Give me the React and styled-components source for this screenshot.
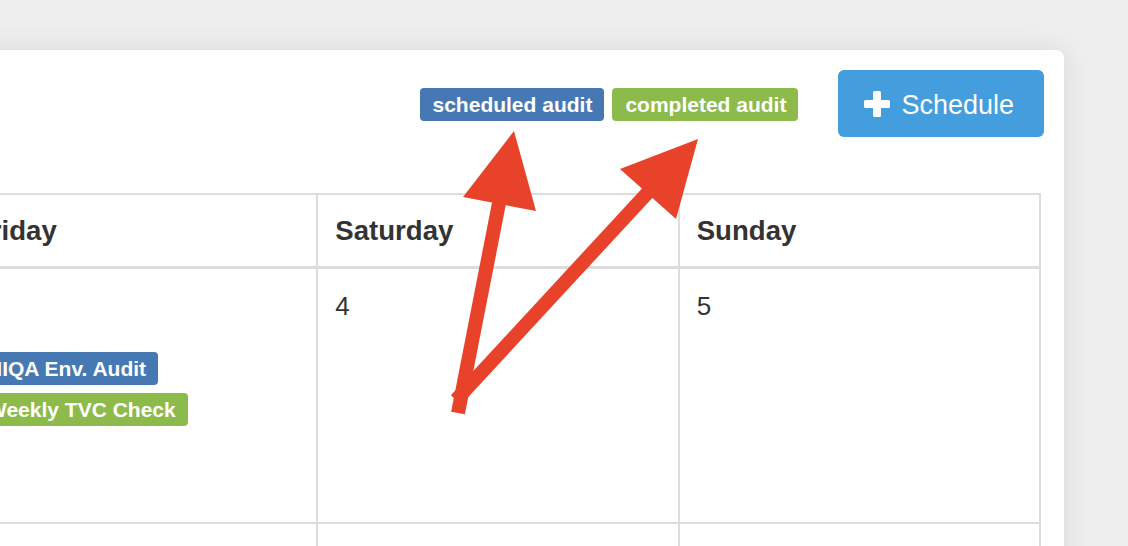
import React from 'react';
import styled, { createGlobalStyle } from 'styled-components';

const GlobalStyle = createGlobalStyle`
  html, body {
    margin: 0;
    padding: 0;
    background: #eeeeee;
    font-family: "Liberation Sans", Arial, Helvetica, sans-serif;
    color: #333333;
    overflow: hidden;
  }
`;

const colors = {
  scheduled: '#4679b4',
  completed: '#8dbb4b',
};

const days = [
  {
    name: 'Friday',
    date: 3,
    events: [
      { title: 'HIQA Env. Audit', kind: 'scheduled' },
      { title: 'Weekly TVC Check', kind: 'completed' },
    ],
  },
  { name: 'Saturday', date: 4, events: [] },
  { name: 'Sunday', date: 5, events: [] },
];

const PlusIcon = () => (
  <svg width="26" height="26" viewBox="0 0 26 26">
    <path
      d="M9 1.5 Q9 0 10.5 0 H15.5 Q17 0 17 1.5 V9 H24.5 Q26 9 26 10.5 V15.5 Q26 17 24.5 17 H17 V24.5 Q17 26 15.5 26 H10.5 Q9 26 9 24.5 V17 H1.5 Q0 17 0 15.5 V10.5 Q0 9 1.5 9 H9 Z"
      fill="#ffffff"
    />
  </svg>
);

const App = () => {
  return (
    <Page>
      <GlobalStyle />
      <Card>
        <Toolbar>
          <Legend>
            <Badge kind="scheduled">scheduled audit</Badge>
            <Badge kind="completed">completed audit</Badge>
          </Legend>
          <ScheduleButton>
            <PlusIcon />
            <span>Schedule</span>
          </ScheduleButton>
        </Toolbar>

        <Calendar>
          <thead>
            <tr>
              {days.map(d => (
                <HeadCell key={d.name}>{d.name}</HeadCell>
              ))}
            </tr>
          </thead>
          <tbody>
            <tr>
              {days.map(d => (
                <DayCell key={d.name}>
                  <DayNumber>{d.date}</DayNumber>
                  {d.events.length > 0 && (
                    <EventList>
                      {d.events.map(e => (
                        <div key={e.title}>
                          <Badge kind={e.kind}>{e.title}</Badge>
                        </div>
                      ))}
                    </EventList>
                  )}
                </DayCell>
              ))}
            </tr>
            <tr>
              {days.map(d => (
                <DayCell key={d.name} />
              ))}
            </tr>
          </tbody>
        </Calendar>
      </Card>

      <Arrows width="1128" height="546" viewBox="0 0 1128 546">
        <g fill="#e8432a" stroke="none">
          <polygon points="514,131 463,197 536,211" />
          <polygon points="698,139 620,169 676,219" />
        </g>
        <g stroke="#e8432a" strokeWidth="14" fill="none">
          <line x1="458" y1="413" x2="500" y2="198" />
          <line x1="456" y1="400" x2="652" y2="188" />
        </g>
      </Arrows>
    </Page>
  );
};

const Page = styled.div`
  position: relative;
  width: 1128px;
  height: 546px;
  padding-top: 50px;
  box-sizing: border-box;
  overflow: hidden;
`;

const Card = styled.div`
  margin-left: -65px;
  width: 1129px;
  box-sizing: border-box;
  padding: 20px 20px 40px 20px;
  background: #ffffff;
  border-radius: 8px;
  box-shadow: 0 0 28px rgba(0, 0, 0, 0.09);
`;

const Toolbar = styled.div`
  display: flex;
  justify-content: flex-end;
  align-items: center;
  gap: 40px;
  height: 67px;
`;

const Legend = styled.div`
  display: flex;
  gap: 8px;
  margin-top: 2px;
`;

const Badge = styled.span`
  display: inline-block;
  padding: 4px 12px 4px 13px;
  border-radius: 4px;
  background: ${props => colors[props.kind]};
  color: #ffffff;
  font-weight: bold;
  font-size: 21px;
  line-height: 25px;
  white-space: nowrap;
`;

const ScheduleButton = styled.button`
  display: flex;
  align-items: center;
  gap: 11px;
  height: 67px;
  padding: 0 30px 0 26px;
  border: none;
  border-radius: 6px;
  background: #449ddc;
  color: #ffffff;
  font-family: "Liberation Sans", Arial, Helvetica, sans-serif;
  font-size: 27px;
  cursor: pointer;

  svg {
    margin-top: 1px;
  }

  span {
    padding-top: 3px;
  }
`;

const Calendar = styled.table`
  margin-top: 56px;
  width: 1086px;
  table-layout: fixed;
  border-collapse: collapse;
`;

const HeadCell = styled.th`
  height: 71px;
  padding: 0 17px;
  text-align: left;
  font-size: 27.6px;
  font-weight: bold;
  color: #333333;
  border: 2px solid #dddddd;
  border-bottom-width: 3px;
`;

const DayCell = styled.td`
  height: 203px;
  padding: 25px 17px;
  vertical-align: top;
  border: 2px solid #dddddd;
`;

const DayNumber = styled.div`
  font-size: 26px;
  line-height: 24px;
  color: #333333;
`;

const EventList = styled.div`
  display: flex;
  flex-direction: column;
  gap: 8px;
  margin-top: 34px;
`;

const Arrows = styled.svg`
  position: absolute;
  top: 0;
  left: 0;
  pointer-events: none;
`;

export default App;
